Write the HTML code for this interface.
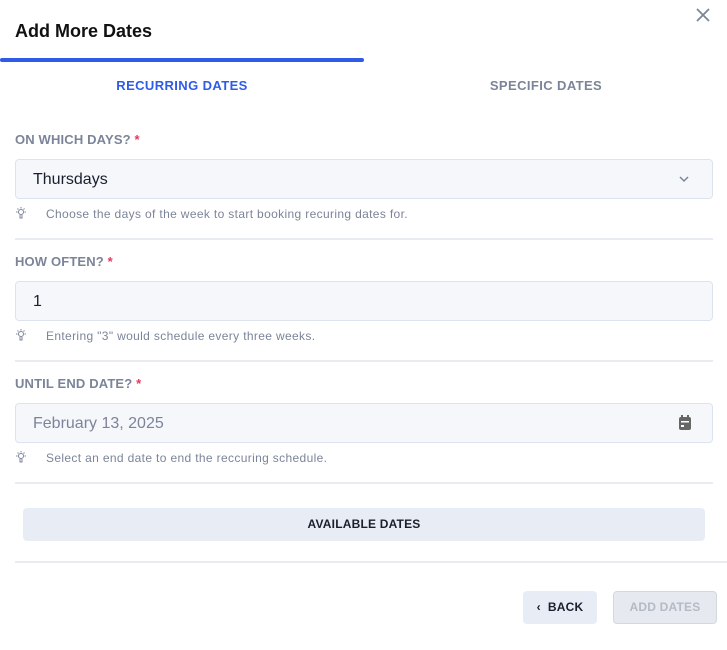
<!DOCTYPE html>
<html><head><meta charset="utf-8"><style>
*{box-sizing:border-box;margin:0;padding:0}
body{width:727px;height:650px;background:#fff;font-family:"Liberation Sans",sans-serif;position:relative;overflow:hidden}
.a{position:absolute}
.title{left:15px;top:21px;font-size:18px;font-weight:bold;color:#111}
.bar{left:0;top:58px;width:364px;height:4px;background:#2f5be8;border-radius:2px}
.tab{top:78px;font-size:13px;font-weight:bold;width:364px;text-align:center;letter-spacing:0.4px}
.lbl{left:15px;font-size:13px;font-weight:bold;color:#7b8499;letter-spacing:0.15px}
.lbl span{color:#e8365d}
.inp{left:15px;width:698px;height:40px;background:#f5f7fb;border:1px solid #dde3ee;border-radius:4px;font-size:16px;padding-left:17px;line-height:39px;color:#1a1f2e}
.hint{left:46px;font-size:12px;color:#7b8499;letter-spacing:0.35px}
.div{left:15px;width:698px;height:2px;background:#e8ecf2}
.btn{font-size:12px;font-weight:bold;text-align:center;border-radius:4px;letter-spacing:0.2px}
</style></head><body>
<div class="a title">Add More Dates</div>
<svg class="a" style="left:696px;top:8px" width="14" height="14" viewBox="0 0 14 14"><path d="M1 1L13 13M13 1L1 13" stroke="#7b8499" stroke-width="1.8"/></svg>
<div class="a bar"></div>
<div class="a tab" style="left:0;color:#2f5be8">RECURRING DATES</div>
<div class="a tab" style="left:364px;color:#7b8499">SPECIFIC DATES</div>

<div class="a lbl" style="top:132px">ON WHICH DAYS? <span>*</span></div>
<div class="a inp" style="top:159px">Thursdays</div>
<svg class="a" style="left:678px;top:175px" width="12" height="8" viewBox="0 0 12 8"><path d="M2 2L6 6L10 2" stroke="#7b8499" stroke-width="1.5" fill="none"/></svg>
<div class="a hint" style="top:207px">Choose the days of the week to start booking recuring dates for.</div>
<div class="a div" style="top:238px"></div>

<div class="a lbl" style="top:254px">HOW OFTEN? <span>*</span></div>
<div class="a inp" style="top:281px">1</div>
<div class="a hint" style="top:329px">Entering "3" would schedule every three weeks.</div>
<div class="a div" style="top:360px"></div>

<div class="a lbl" style="top:376px">UNTIL END DATE? <span>*</span></div>
<div class="a inp" style="top:403px;color:#7b8499">February 13, 2025</div>
<svg class="a" style="left:678px;top:415px" width="14" height="16" viewBox="0 0 14 16"><rect x="1" y="2" width="12" height="13" rx="2" fill="#666"/><rect x="3" y="0" width="2" height="4" fill="#666"/><rect x="9" y="0" width="2" height="4" fill="#666"/><rect x="3" y="6" width="8" height="1.5" fill="#fff"/><rect x="3" y="10" width="3" height="2" fill="#fff"/></svg>
<div class="a hint" style="top:451px">Select an end date to end the reccuring schedule.</div>
<div class="a div" style="top:482px"></div>

<svg class="a" style="left:14px;top:206px" width="14" height="14" viewBox="0 0 14 14"><g stroke="#7b8499" fill="none" stroke-width="1"><circle cx="7" cy="6" r="2.5"/><path d="M6 9v3h2V9M7 1v1.5M2 6h1.5M10.5 6H12M3.5 2.5l1 1M10.5 2.5l-1 1"/></g></svg>
<svg class="a" style="left:14px;top:328px" width="14" height="14" viewBox="0 0 14 14"><g stroke="#7b8499" fill="none" stroke-width="1"><circle cx="7" cy="6" r="2.5"/><path d="M6 9v3h2V9M7 1v1.5M2 6h1.5M10.5 6H12M3.5 2.5l1 1M10.5 2.5l-1 1"/></g></svg>
<svg class="a" style="left:14px;top:450px" width="14" height="14" viewBox="0 0 14 14"><g stroke="#7b8499" fill="none" stroke-width="1"><circle cx="7" cy="6" r="2.5"/><path d="M6 9v3h2V9M7 1v1.5M2 6h1.5M10.5 6H12M3.5 2.5l1 1M10.5 2.5l-1 1"/></g></svg>

<div class="a btn" style="left:23px;top:508px;width:682px;height:33px;line-height:33px;background:#e8edf5;color:#1a1f2e">AVAILABLE DATES</div>
<div class="a" style="left:15px;top:561px;width:712px;height:2px;background:#e8ecf2"></div>
<div class="a btn" style="left:523px;top:591px;width:74px;height:33px;line-height:33px;background:#e8edf5;color:#1a1f2e">&#8249;&nbsp; BACK</div>
<div class="a btn" style="left:613px;top:591px;width:104px;height:33px;line-height:31px;background:#e6e9ef;border:1px solid #d3d8e0;color:#b4bac6">ADD DATES</div>
</body></html>
